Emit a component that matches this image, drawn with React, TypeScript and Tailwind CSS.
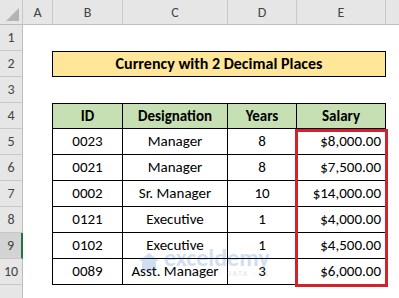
import React from 'react';

const rows = [
  { id: '0023', des: 'Manager', yrs: '8', sal: '$8,000.00' },
  { id: '0021', des: 'Manager', yrs: '8', sal: '$7,500.00' },
  { id: '0002', des: 'Sr. Manager', yrs: '10', sal: '$14,000.00' },
  { id: '0121', des: 'Executive', yrs: '1', sal: '$4,000.00' },
  { id: '0102', des: 'Executive', yrs: '1', sal: '$4,500.00' },
  { id: '0089', des: 'Asst. Manager', yrs: '3', sal: '$6,000.00' },
];

const font = { fontFamily: 'Carlito, Calibri, Lato, "Liberation Sans", sans-serif' };

function RowHead({ n, active }: { n?: number; active?: boolean }) {
  return (
    <div
      className={`w-[23px] shrink-0 flex items-center justify-center border-b border-[#c8c8c8] text-[14px] text-[#444] ${
        active ? 'bg-[#d3d3d3] border-r-2 border-r-[#217346]' : 'bg-[#e6e6e6] border-r border-r-[#bdbdbd]'
      }`}
    >
      {n}
    </div>
  );
}

export default function App() {
  return (
    <div className="relative w-[399px] h-[298px] overflow-hidden bg-white text-black" style={font}>
      {/* Column headers */}
      <div className="flex h-[25px] bg-[#e6e6e6] border-b border-[#bdbdbd] text-[14px] text-[#444]">
        <div className="w-[23px] shrink-0 border-r border-[#c8c8c8] flex items-end justify-end p-[3px]">
          <div className="w-0 h-0 border-l-[13px] border-l-transparent border-b-[13px] border-b-[#b4b4b4]" />
        </div>
        <div className="w-[30px] shrink-0 border-r border-[#c8c8c8] flex items-center justify-center">A</div>
        <div className="w-[70px] shrink-0 border-r border-[#c8c8c8] flex items-center justify-center">B</div>
        <div className="w-[105px] shrink-0 border-r border-[#c8c8c8] flex items-center justify-center">C</div>
        <div className="w-[69px] shrink-0 border-r border-[#c8c8c8] flex items-center justify-center">D</div>
        <div className="w-[89px] shrink-0 border-r border-[#c8c8c8] flex items-center justify-center">E</div>
        <div className="flex-1" />
      </div>

      {/* Row 1 */}
      <div className="flex h-[26px]">
        <RowHead n={1} />
      </div>

      {/* Row 2: title */}
      <div className="flex h-[26px]">
        <RowHead n={2} />
        <div className="w-[29px] shrink-0" />
        <div className="w-[334px] shrink-0 bg-[#ffe699] border border-black flex items-center justify-center font-bold text-[16px]">
          Currency with 2 Decimal Places
        </div>
      </div>

      {/* Row 3 */}
      <div className="flex h-[26px]">
        <RowHead n={3} />
      </div>

      {/* Row 4: table header */}
      <div className="flex h-[26px]">
        <RowHead n={4} />
        <div className="w-[29px] shrink-0" />
        <div className="flex bg-[#c6e0b4] border-t border-l border-black font-bold text-[15px]">
          <div className="w-[70px] border-r border-b border-black flex items-center justify-center">ID</div>
          <div className="w-[105px] border-r border-b border-black flex items-center justify-center">Designation</div>
          <div className="w-[69px] border-r border-b border-black flex items-center justify-center">Years</div>
          <div className="w-[89px] border-r border-b border-black flex items-center justify-center">Salary</div>
        </div>
      </div>

      {rows.map((r, i) => (
        <div key={r.id} className="flex h-[26px]">
          <RowHead n={i + 5} active={i === 4} />
          <div className="w-[29px] shrink-0" />
          <div className="flex border-l border-black text-[15px]">
            <div className="w-[70px] border-r border-b border-black flex items-center justify-center">{r.id}</div>
            <div className="w-[105px] border-r border-b border-black flex items-center justify-center">{r.des}</div>
            <div className="w-[69px] border-r border-b border-black flex items-center justify-center">{r.yrs}</div>
            <div className="w-[89px] border-r border-b border-black flex items-center justify-end pr-[4px]">{r.sal}</div>
          </div>
        </div>
      ))}

      {/* Row 11 (cut off) */}
      <div className="flex h-[26px]">
        <RowHead />
      </div>

      {/* red highlight on Salary values */}
      <div className="absolute left-[295px] top-[129px] w-[93px] h-[158px] border-[3px] border-[#d3222b]" />

      {/* watermark */}
      <div className="absolute left-[138px] top-[246px] flex items-center gap-1 opacity-20 pointer-events-none">
        <svg width="22" height="20" viewBox="0 0 22 20">
          <path d="M11 1 L21 9 L18 9 L18 19 L4 19 L4 9 L1 9 Z" fill="#1f5fbf" />
        </svg>
        <div className="flex flex-col leading-none">
          <span className="text-[24px] font-bold text-[#1f5fbf]">exceldemy</span>
          <span className="text-[7px] tracking-[2px] text-[#1f5fbf] self-end">EXCEL · DATA · BI</span>
        </div>
      </div>
    </div>
  );
}
